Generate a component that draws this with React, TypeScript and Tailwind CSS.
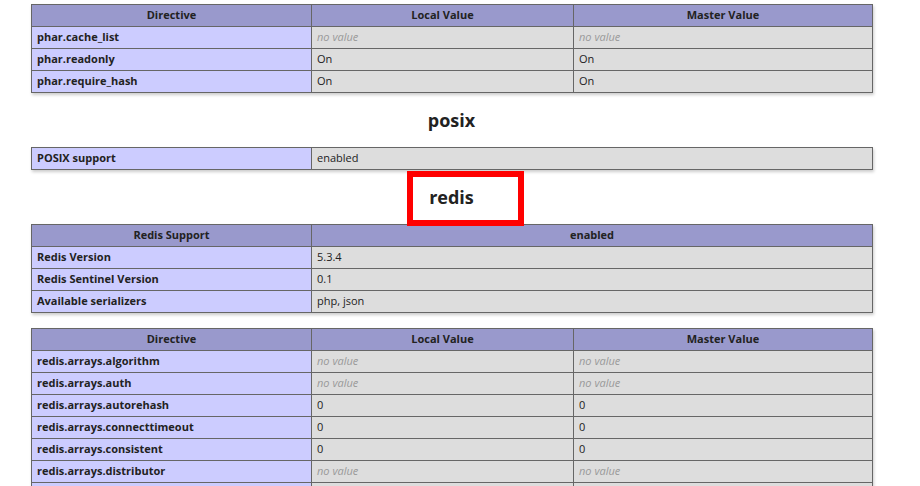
import React from 'react'

type Cell = { text: string; empty?: boolean }

const font = { fontFamily: '"Open Sans", "Noto Sans", sans-serif' }

function HeaderRow({ cols, grid }: { cols: string[]; grid: string }) {
  return (
    <div className={`grid ${grid}`}>
      {cols.map((c, i) => (
        <div
          key={i}
          className="flex h-[22px] items-center justify-center border-r border-b border-[#666] bg-[#99c] px-[5px] text-[11px] font-bold text-[#222]"
        >
          {c}
        </div>
      ))}
    </div>
  )
}

function DataRow({ name, values, grid }: { name: string; values: Cell[]; grid: string }) {
  return (
    <div className={`grid ${grid}`}>
      <div className="flex h-[22px] items-center border-r border-b border-[#666] bg-[#ccf] px-[5px] text-[11px] font-bold text-[#222]">
        {name}
      </div>
      {values.map((v, i) => (
        <div
          key={i}
          className="flex h-[22px] items-center border-r border-b border-[#666] bg-[#ddd] px-[5px] text-[11px] text-[#222]"
        >
          {v.empty ? <i className="text-[#999]">no value</i> : v.text}
        </div>
      ))}
    </div>
  )
}

function Table({ children }: { children: React.ReactNode }) {
  return (
    <div className="ml-[31px] w-[842px] border-t border-l border-[#666] shadow-[1px_2px_3px_#ccc]">
      {children}
    </div>
  )
}

const NV: Cell = { text: '', empty: true }
const three = 'grid-cols-[280px_262px_299px]'
const two = 'grid-cols-[280px_561px]'

function Heading({ title, marked }: { title: string; marked?: boolean }) {
  return (
    <div className="relative flex h-[54px] items-center justify-center">
      <h2 className="text-[18px] font-bold text-[#222]">{title}</h2>
      {marked && (
        <div className="absolute left-[407px] top-[1px] h-[55px] w-[117px] border-[6px] border-[#ff0000]" />
      )}
    </div>
  )
}

export default function App() {
  const redisDirectives: [string, Cell, Cell][] = [
    ['redis.arrays.algorithm', NV, NV],
    ['redis.arrays.auth', NV, NV],
    ['redis.arrays.autorehash', { text: '0' }, { text: '0' }],
    ['redis.arrays.connecttimeout', { text: '0' }, { text: '0' }],
    ['redis.arrays.consistent', { text: '0' }, { text: '0' }],
    ['redis.arrays.distributor', NV, NV],
  ]

  return (
    <div className="h-[486px] w-[920px] overflow-hidden bg-white" style={font}>
      <div className="w-[903px] pt-[4px]">
        <Table>
          <HeaderRow grid={three} cols={['Directive', 'Local Value', 'Master Value']} />
          <DataRow grid={three} name="phar.cache_list" values={[NV, NV]} />
          <DataRow grid={three} name="phar.readonly" values={[{ text: 'On' }, { text: 'On' }]} />
          <DataRow grid={three} name="phar.require_hash" values={[{ text: 'On' }, { text: 'On' }]} />
        </Table>

        <Heading title="posix" />

        <Table>
          <DataRow grid={two} name="POSIX support" values={[{ text: 'enabled' }]} />
        </Table>

        <Heading title="redis" marked />

        <Table>
          <HeaderRow grid={two} cols={['Redis Support', 'enabled']} />
          <DataRow grid={two} name="Redis Version" values={[{ text: '5.3.4' }]} />
          <DataRow grid={two} name="Redis Sentinel Version" values={[{ text: '0.1' }]} />
          <DataRow grid={two} name="Available serializers" values={[{ text: 'php, json' }]} />
        </Table>

        <div className="h-[15px]" />

        <Table>
          <HeaderRow grid={three} cols={['Directive', 'Local Value', 'Master Value']} />
          {redisDirectives.map(([n, l, m]) => (
            <DataRow key={n} grid={three} name={n} values={[l, m]} />
          ))}
          {/* next row, scrolled below the fold */}
          <DataRow grid={three} name="" values={[{ text: '' }, { text: '' }]} />
        </Table>
      </div>
    </div>
  )
}
